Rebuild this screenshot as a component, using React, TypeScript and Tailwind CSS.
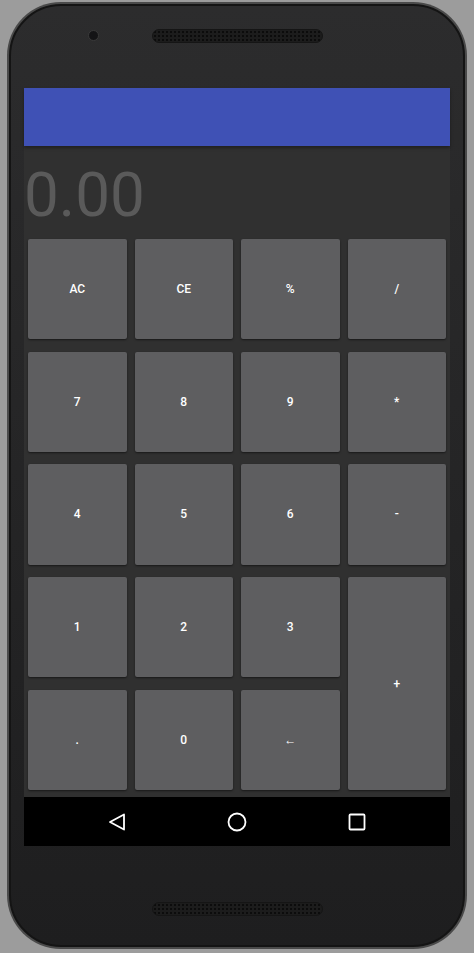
import React from "react";

const keys: { label: string; tall?: boolean }[] = [
  { label: "AC" },
  { label: "CE" },
  { label: "%" },
  { label: "/" },
  { label: "7" },
  { label: "8" },
  { label: "9" },
  { label: "*" },
  { label: "4" },
  { label: "5" },
  { label: "6" },
  { label: "-" },
  { label: "1" },
  { label: "2" },
  { label: "3" },
  { label: "+", tall: true },
  { label: "." },
  { label: "0" },
  { label: "←" },
];

function Speaker() {
  return (
    <div className="h-[14px] w-[171px] rounded-full border border-[#151515] bg-[#1c1c1c] bg-[radial-gradient(circle,#0c0c0c_1px,transparent_1.2px)] bg-[length:4px_4px]" />
  );
}

function Key({ label, tall }: { label: string; tall?: boolean }) {
  return (
    <button
      className={
        "flex items-center justify-center rounded-[2px] bg-[#5e5e60] text-[12px] font-medium text-white shadow-[0_1px_2px_rgba(0,0,0,0.5)] " +
        (tall ? "row-span-2" : "")
      }
    >
      {label}
    </button>
  );
}

export default function App() {
  return (
    <div className="h-[953px] w-[474px] overflow-hidden bg-[#9c9c9c] pt-[2px] pl-[7px] font-['Roboto',sans-serif]">
      <div className="h-[947px] w-[460px] rounded-[54px] bg-[#4a4a4a] p-[2px]">
        <div className="flex h-full w-full flex-col rounded-[52px] border-[2px] border-[#141414] bg-gradient-to-b from-[#2c2c2d] to-[#1e1e1f]">
          {/* top bezel */}
          <div className="relative flex h-[82px] shrink-0 items-start justify-center pt-[23px]">
            <div className="absolute left-[77px] top-[24px] h-[11px] w-[11px] rounded-full border border-[#3a3a3a] bg-[#141416]" />
            <Speaker />
          </div>

          {/* screen */}
          <div className="mx-[13px] flex flex-col bg-[#303030]">
            <div className="h-[58px] bg-[#3f51b5] shadow-[0_2px_3px_rgba(0,0,0,0.35)]" />
            <div className="flex h-[93px] items-center pt-[4px] text-[62px] leading-none text-[#5a5a5a]">
              0.00
            </div>
            <div className="grid h-[551px] grid-cols-4 grid-rows-5 gap-x-[8px] gap-y-[12.5px] px-[4px]">
              {keys.map((k) => (
                <Key key={k.label} label={k.label} tall={k.tall} />
              ))}
            </div>
            <div className="h-[7px]" />
            <div className="flex h-[49px] items-center justify-center gap-[99px] bg-black">
              <svg width="20" height="20" viewBox="0 0 20 20">
                <path d="M17 2.5 L3 10 L17 17.5 Z" fill="none" stroke="#fff" strokeWidth="1.8" strokeLinejoin="round" />
              </svg>
              <svg width="22" height="22" viewBox="0 0 22 22">
                <circle cx="11" cy="11" r="8.5" fill="none" stroke="#fff" strokeWidth="1.8" />
              </svg>
              <svg width="20" height="20" viewBox="0 0 20 20">
                <rect x="2.5" y="2.5" width="15" height="15" rx="1" fill="none" stroke="#fff" strokeWidth="1.8" />
              </svg>
            </div>
          </div>

          {/* bottom bezel */}
          <div className="flex flex-1 justify-center pt-[56px]">
            <Speaker />
          </div>
        </div>
      </div>
    </div>
  );
}
